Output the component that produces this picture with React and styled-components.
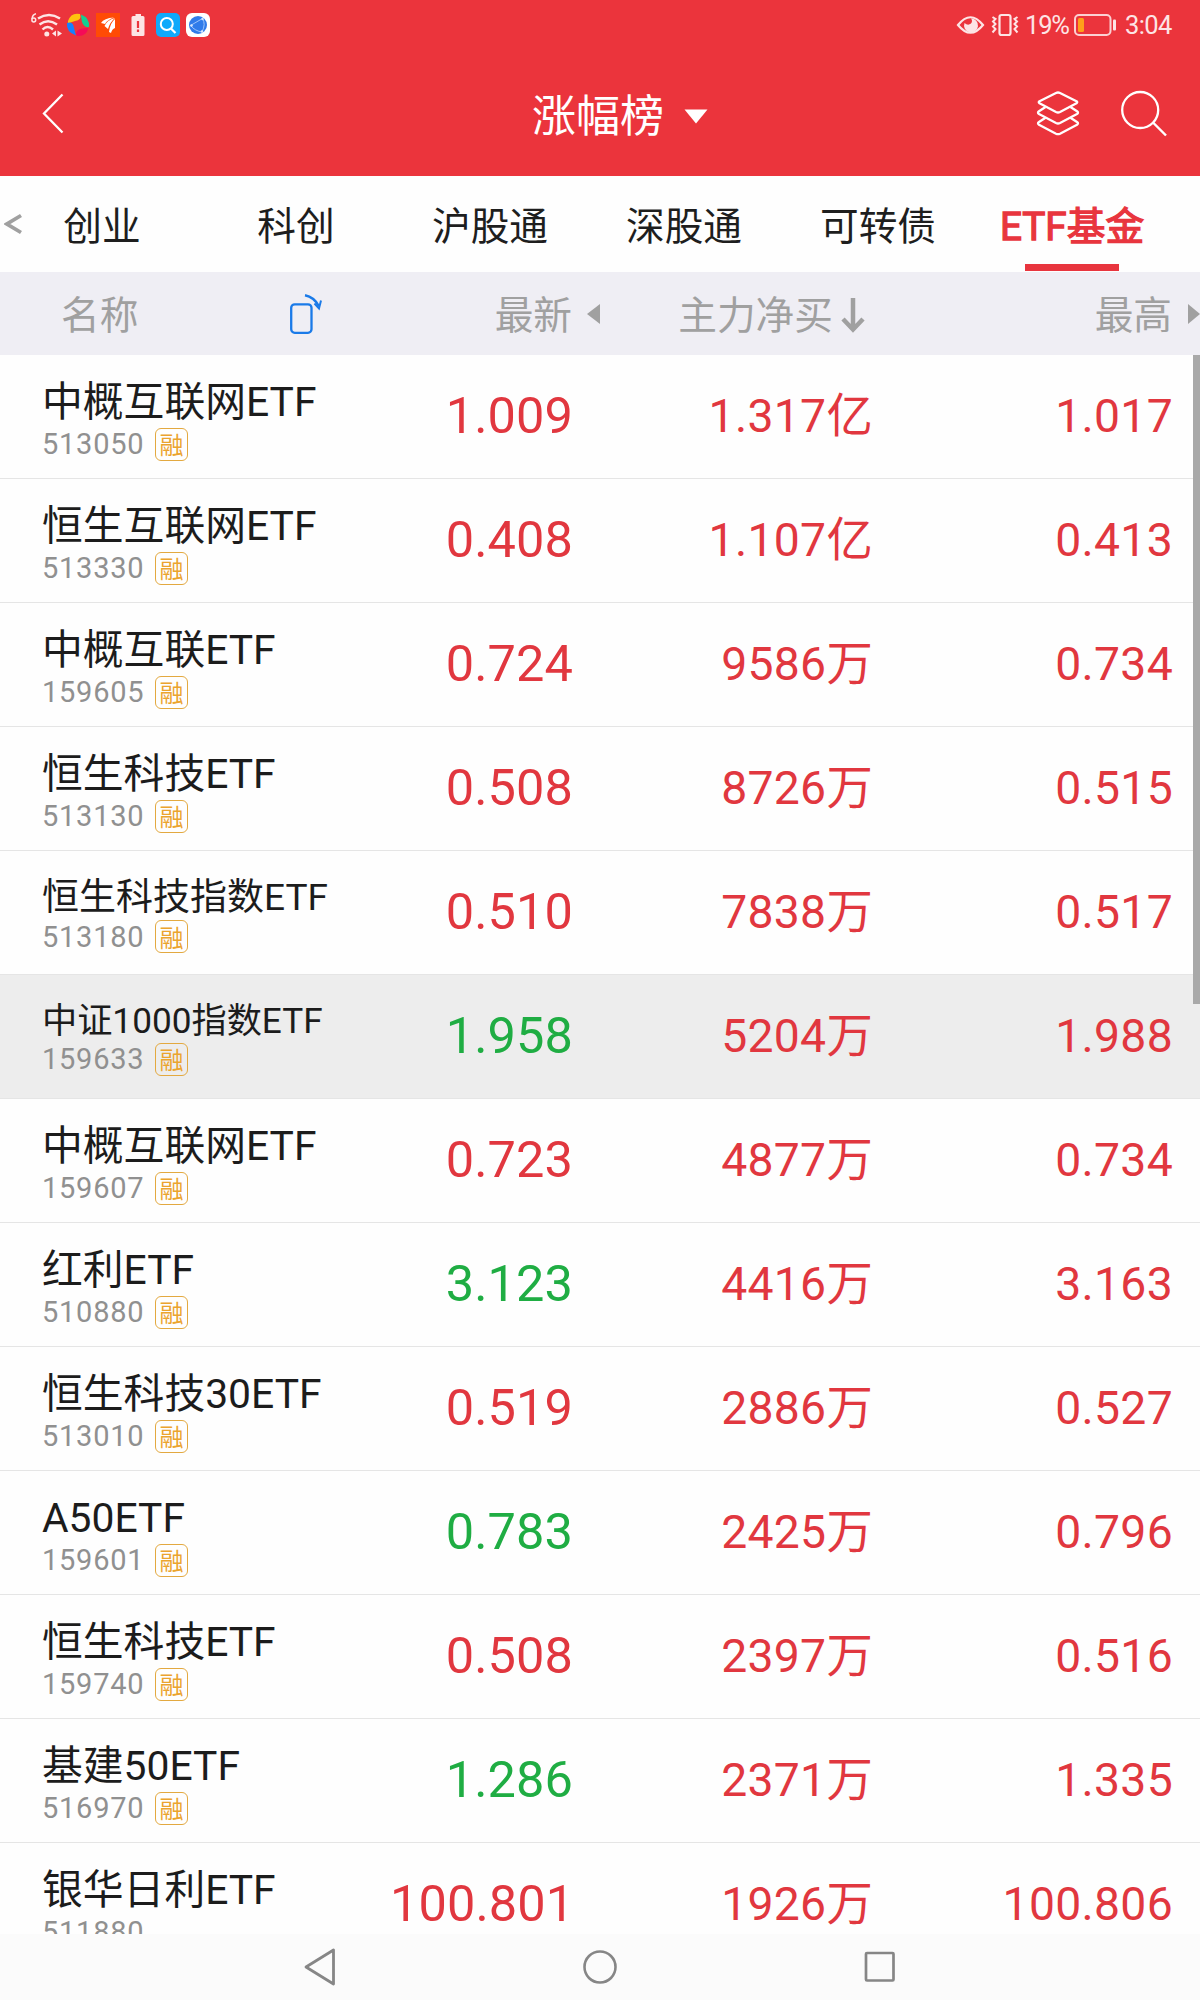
import React from "react";
import styled, { createGlobalStyle } from "styled-components"

const GlobalStyle = createGlobalStyle`
  * {
    box-sizing: border-box;
  }
  body {
    margin: 0;
    background: #fefefe;
    font-family: Roboto, "Noto Sans CJK SC", sans-serif;
  }
`

const Screen = styled.div`
  width: 1200px;
  height: 2000px;
  display: flex;
  flex-direction: column;
  overflow: hidden;
  background: #fefefe;
`

const StatusBar = styled.div`
  height: 50px;
  flex: none;
  display: flex;
  justify-content: space-between;
  align-items: center;
  padding: 0 28px 0 30px;
  background: #eb343c;
  color: #fde4e5;
`

const StatusText = styled.span`
  font-size: 25.5px;
  line-height: 30px;
  width: ${props => props.$width}px;
  letter-spacing: ${props => props.$spacing || 0}px;
  white-space: nowrap;
`

const StatusGroup = styled.div`
  display: flex;
  align-items: center;
`

const BatterySlot = styled.div`
  display: flex;
  margin: 0 8px 0 3px;
`

const TitleBar = styled.header`
  height: 126px;
  flex: none;
  display: grid;
  grid-template-columns: 300px 1fr 300px;
  align-items: center;
  padding: 0 32px 0 41px;
  background: #eb343c;
  color: #fff;
`

const Title = styled.h1`
  margin: 0;
  display: flex;
  align-items: center;
  justify-content: center;
  gap: 20px;
  padding: 7px 0 0 31px;
  font-size: 44px;
  line-height: 60px;
  font-weight: 400;
`

const Caret = styled.svg`
  width: 24px;
  height: 15px;
`

const TitleActions = styled.div`
  display: flex;
  justify-content: flex-end;
  gap: 40px;
`

const TabBar = styled.nav`
  height: 96px;
  flex: none;
  display: flex;
  padding-left: 4px;
`

const TabArrow = styled.div`
  width: 20px;
  padding-top: 36px;
`

const Tab = styled.div`
  width: 194px;
  display: flex;
  flex-direction: column;
  align-items: center;
  justify-content: space-between;
  padding: 22px 0 1px;
  margin-left: ${props => props.$shift || 0}px;
  font-size: 38.7px;
  line-height: 58px;
  white-space: nowrap;
  color: ${props => props.$active ? "#e8353e" : "#1e1e1e"};
  -webkit-text-stroke: ${props => props.$active ? "1.3px #e8353e" : "0"};
`

const Underline = styled.div`
  width: 94px;
  height: 7px;
  background: #e8353e;
`

const HeadRow = styled.div`
  height: 83px;
  flex: none;
  display: grid;
  grid-template-columns: 290px 282px 300px 300px;
  align-items: center;
  background: #efeef4;
  color: #a0a0a0;
  font-size: 38.7px;
  line-height: 56px;
`

const HeadCell = styled.div`
  display: flex;
  align-items: center;
  justify-content: ${props => props.$left ? "flex-start" : "flex-end"};
  padding-left: ${props => props.$left ? 61 : 0}px;
  white-space: nowrap;
`

const HeadLabel = styled.span`
  padding-top: 5px;
`

// sort marks hang outside of the text column
const HeadMark = styled.span`
  display: flex;
  margin-top: ${props => props.$drop || 0}px;
  width: ${props => props.$width}px;
  margin-left: ${props => props.$gap}px;
  margin-right: ${props => -(props.$hang || 0)}px;
`

const RotateCell = styled.div`
  display: flex;
  align-items: center;
  justify-content: space-between;
`

const List = styled.main`
  position: relative;
  flex: 1;
  overflow: hidden;
`

const ScrollThumb = styled.div`
  position: absolute;
  top: 0;
  right: 0;
  width: 7px;
  height: 649px;
  background: #a9a9a9;
`

const Row = styled.div`
  height: 124px;
  display: grid;
  grid-template-columns: 390px 183px 300px 300px;
  align-items: center;
  border-bottom: 1px solid #e5e5e5;
  background: ${props => props.$selected ? "#ededed" : "#fefefe"};
`

const Fund = styled.div`
  display: flex;
  flex-direction: column;
  padding: 2px 0 ${props => props.$small ? 2 : 0}px 42px;
`

const FundName = styled.div`
  font-size: ${props => props.$size}px;
  line-height: 1.42;
  margin-bottom: -4px;
  color: #1c1c1c;
  white-space: nowrap;
`

const FundCode = styled.div`
  display: flex;
  align-items: center;
  height: 33px;
  font-size: 29px;
  line-height: 33px;
  letter-spacing: 0.75px;
  color: #909090;
`

const CodeText = styled.span`
  width: 113px;
  padding-top: 1px;
`

const Badge = styled.span`
  width: 33px;
  height: 33px;
  display: flex;
  align-items: center;
  justify-content: center;
  border: 1.5px solid #e3a940;
  border-radius: 6px;
  font-family: "Noto Sans CJK SC", sans-serif;
  font-size: 24px;
  line-height: 28px;
  letter-spacing: 0;
  color: #eba42e;
`

const Price = styled.div`
  text-align: right;
  font-size: ${props => props.$large ? 50.5 : 46.3}px;
  letter-spacing: ${props => props.$large ? 0.1 : 0.3}px;
  line-height: 60px;
  padding-bottom: 1px;
  color: ${props => props.$down ? "#1fad43" : "#e1373f"};
  white-space: nowrap;
`

const NavBar = styled.footer`
  height: 66px;
  flex: none;
  display: flex;
  justify-content: center;
  align-items: center;
  gap: 246px;
  background: #fbfbfb;
`

const funds = [
  { name: "中概互联网ETF", code: "513050", last: "1.009", net: "1.317亿", high: "1.017" },
  { name: "恒生互联网ETF", code: "513330", last: "0.408", net: "1.107亿", high: "0.413" },
  { name: "中概互联ETF", code: "159605", last: "0.724", net: "9586万", high: "0.734" },
  { name: "恒生科技ETF", code: "513130", last: "0.508", net: "8726万", high: "0.515" },
  { name: "恒生科技指数ETF", code: "513180", last: "0.510", net: "7838万", high: "0.517", size: 37 },
  { name: "中证1000指数ETF", code: "159633", last: "1.958", net: "5204万", high: "1.988", size: 35.2, down: true, selected: true },
  { name: "中概互联网ETF", code: "159607", last: "0.723", net: "4877万", high: "0.734" },
  { name: "红利ETF", code: "510880", last: "3.123", net: "4416万", high: "3.163", down: true },
  { name: "恒生科技30ETF", code: "513010", last: "0.519", net: "2886万", high: "0.527" },
  { name: "A50ETF", code: "159601", last: "0.783", net: "2425万", high: "0.796", down: true },
  { name: "恒生科技ETF", code: "159740", last: "0.508", net: "2397万", high: "0.516" },
  { name: "基建50ETF", code: "516970", last: "1.286", net: "2371万", high: "1.335", down: true },
  { name: "银华日利ETF", code: "511880", last: "100.801", net: "1926万", high: "100.806", plain: true },
]

const StatusIconsLeft = () => (
  <svg width="182" height="28" viewBox="30 10 182 28">
    <g fill="none" stroke="#fde4e5" strokeWidth="2.4">
      <path d="M38 17.500Q49 10.500 60 17.500" />
      <path d="M39.500 23.500Q48 17 57 23.500" />
      <path d="M42.500 28.500Q47.500 23.500 53 28.500" />
      <path d="M36 12.800Q32.500 13.500 32 18" strokeWidth="1.500" />
      <circle cx="33.800" cy="19" r="1.900" strokeWidth="1.500" />
    </g>
    <circle cx="46.800" cy="33" r="2.500" fill="#fde4e5" />
    <path d="M52 32.500L56 29.500V35.500ZM62 32.500L57.500 29.500V35.500Z" fill="#fde4e5" />
    <path d="M68 20Q71 11 80 13Q82 19 75 20Q71 21 68 23Z" fill="#ffc20e" />
    <path d="M81 13.500Q90 17 89 26Q84 27 82 21Q81 17 81 13.500Z" fill="#12cf91" />
    <path d="M88.500 27Q86 36 77 35Q74 31 80 28Q84 27 88.500 27Z" fill="#f50b57" />
    <path d="M76 34.500Q66 31 67 22Q73 20 74 27Q75 31 76 34.500Z" fill="#1680ff" />
    <rect x="96" y="12" width="24" height="24" fill="#ff4b05" />
    <path d="M101 22Q104 17 114 16.500Q107 19 105 23ZM104.500 25Q107 19 115 17Q110 21 108 28ZM109 31Q110 22 115 18V27Q112 28 111 32Z" fill="#fff" />
    <path d="M135.500 13H141V15H143Q144.500 15 144.500 16.500V33.500Q144.500 35 143 35H133Q131.500 35 131.500 33.500V16.500Q131.500 15 133 15H135.500Z" fill="#fde4e5" />
    <path d="M138 20V27M138 28.500V31" stroke="#eb343c" strokeWidth="2.200" />
    <rect x="156" y="12" width="24" height="24" rx="5" fill="#10a9fb" />
    <circle cx="166.800" cy="23" r="6" fill="none" stroke="#fff" strokeWidth="2" />
    <path d="M171 27.500L175.500 32" stroke="#fff" strokeWidth="2.200" />
    <rect x="186" y="12" width="24" height="24" rx="6" fill="#fff" />
    <circle cx="198" cy="24" r="9" fill="#2f7bea" />
    <path d="M190.500 24.500L202.500 17.500Q206 23 202 31Q195 30 190.500 24.500" fill="none" stroke="#b9d5ff" strokeWidth="0.800" />
    <circle cx="191.500" cy="24.500" r="1.300" fill="#d5e6ff" />
    <circle cx="202.500" cy="18" r="1.200" fill="#d5e6ff" />
    <circle cx="202" cy="30.500" r="1.300" fill="#d5e6ff" />
  </svg>
)

const EyeIcon = () => (
  <svg width="69" height="28" viewBox="957 10 69 28">
    <path d="M959 24Q971.500 8.500 984 24Q971.500 39.500 959 24Z" fill="none" stroke="#fde4e5" strokeWidth="2.200" />
    <path d="M972 17.500A7 7 0 1 1 965.500 22Q969 25 972 22.500Q974 20 972 17.500Z" fill="#fde4e5" />
    <rect x="1000.500" y="14" width="11" height="20" rx="2" fill="none" stroke="#fde4e5" strokeWidth="2.200" />
    <path d="M993.500 16L996.500 18L994 20.500L996.500 23L994 25.500L996.500 28L993.500 31.500M1018.500 16L1015.500 18L1018 20.500L1015.500 23L1018 25.500L1015.500 28L1018.500 31.500" fill="none" stroke="#fde4e5" strokeWidth="2" />
  </svg>
)

const BatteryIcon = () => (
  <svg width="43" height="24" viewBox="0 0 43 24">
    <rect x="1" y="2" width="35.500" height="20" rx="4" fill="none" stroke="#fbd0d2" strokeWidth="2" />
    <rect x="4" y="5" width="6" height="14" rx="1.500" fill="#ff9f1a" />
    <rect x="39" y="6.500" width="3" height="11" rx="1" fill="#fde4e5" />
  </svg>
)

const BackIcon = () => (
  <svg width="26" height="44" viewBox="0 0 26 44">
    <path d="M21.500 3.500L3 22.500L21.500 41.500" fill="none" stroke="#fff" strokeWidth="2.300" />
  </svg>
)

const LayersIcon = () => (
  <svg width="44" height="48" viewBox="0 0 44 48">
    <g fill="none" stroke="#fff" strokeWidth="2.300" strokeLinejoin="round">
      <path d="M20 4Q22 3 24 4L40.500 12.300Q42 13.200 40.500 14.200L24 23Q22 24 20 23L3.500 14.200Q2 13.200 3.500 12.300Z" />
      <path d="M9.500 18L3 22.300Q1 23.700 3 25L20 34Q22 35 24 34L41 25Q43 23.700 41 22.300L34.500 18" />
      <path d="M9.500 28.700L3 33Q1 34.300 3 35.700L20 44.700Q22 45.700 24 44.700L41 35.700Q43 34.300 41 33L34.500 28.700" />
    </g>
  </svg>
)

const SearchIcon = () => (
  <svg width="48" height="48" viewBox="0 0 48 48">
    <circle cx="20.200" cy="21" r="18" fill="none" stroke="#fff" strokeWidth="2.300" />
    <path d="M33 33.500L46 46.500" stroke="#fff" strokeWidth="2.400" />
  </svg>
)

const RotateIcon = () => (
  <svg width="34" height="42" viewBox="0 0 34 42">
    <rect x="1.200" y="11.300" width="20.300" height="28.500" rx="3.500" fill="none" stroke="#1a7ae8" strokeWidth="2.300" />
    <path d="M15 2.200Q24 4 28.800 13" fill="none" stroke="#1a7ae8" strokeWidth="2.500" />
    <path d="M24.500 10.500L29 15.500L31 7.500" fill="none" stroke="#1a7ae8" strokeWidth="2" />
  </svg>
)

const App = () => {
  return (
    <>
      <GlobalStyle />
      <Screen>

        <StatusBar>
          <StatusIconsLeft />
          <StatusGroup>
            <EyeIcon />
            <StatusText $width={46} $spacing={-1.2}>19%</StatusText>
            <BatterySlot>
              <BatteryIcon />
            </BatterySlot>
            <StatusText $width={47} $spacing={-0.6}>3:04</StatusText>
          </StatusGroup>
        </StatusBar>

        <TitleBar>
          <BackIcon />
          <Title>
            涨幅榜
            <Caret viewBox="0 0 24 15"><path d="M0.500 0.500H23.500L12 14.500Z" fill="#fff" /></Caret>
          </Title>
          <TitleActions>
            <LayersIcon />
            <SearchIcon />
          </TitleActions>
        </TitleBar>

        <TabBar>
          <TabArrow>
            <svg width="18" height="24" viewBox="0 0 18 24"><path d="M17 3.500L3 12L17 20.500" fill="none" stroke="#a0a0a0" strokeWidth="3.800" /></svg>
          </TabArrow>
          <Tab $shift={-19}>创业</Tab>
          <Tab>科创</Tab>
          <Tab>沪股通</Tab>
          <Tab>深股通</Tab>
          <Tab>可转债</Tab>
          <Tab $active>
            ETF基金
            <Underline />
          </Tab>
        </TabBar>

        <HeadRow>
          <HeadCell $left>
            <HeadLabel>名称</HeadLabel>
          </HeadCell>
          <RotateCell>
            <RotateIcon />
            <HeadCell>
              <HeadLabel>最新</HeadLabel>
              <HeadMark $width={13} $gap={15} $hang={28}>
                <svg width="13" height="20" viewBox="0 0 13 20"><path d="M13 0V20L0 10Z" fill="#a0a0a0" /></svg>
              </HeadMark>
            </HeadCell>
          </RotateCell>
          <HeadCell>
            <HeadLabel>主力净买</HeadLabel>
            <HeadMark $width={24} $gap={8} $hang={-7} $drop={5}>
              <svg width="24" height="36" viewBox="0 0 24 36"><path d="M12 0V31M2 21L12 31.500L22 21" fill="none" stroke="#a0a0a0" strokeWidth="4.500" /></svg>
            </HeadMark>
          </HeadCell>
          <HeadCell>
            <HeadLabel>最高</HeadLabel>
            <HeadMark $width={12} $gap={16} $hang={28}>
              <svg width="12" height="20" viewBox="0 0 12 20"><path d="M0 0V20L12 10Z" fill="#a0a0a0" /></svg>
            </HeadMark>
          </HeadCell>
        </HeadRow>

        <List>
          {funds.map(fund => (
            <Row key={fund.code} $selected={fund.selected}>
              <Fund $small={fund.size}>
                <FundName $size={fund.size || 40.8}>{fund.name}</FundName>
                <FundCode>
                  <CodeText>{fund.code}</CodeText>
                  {!fund.plain && <Badge>融</Badge>}
                </FundCode>
              </Fund>
              <Price $large $down={fund.down}>{fund.last}</Price>
              <Price>{fund.net}</Price>
              <Price>{fund.high}</Price>
            </Row>
          ))}
          <ScrollThumb />
        </List>

        <NavBar>
          <svg width="34" height="40" viewBox="0 0 34 40"><path d="M30.500 3V37L3 20Z" fill="none" stroke="#868686" strokeWidth="2.800" strokeLinejoin="round" /></svg>
          <svg width="34" height="34" viewBox="0 0 34 34"><circle cx="17" cy="17" r="15.500" fill="none" stroke="#868686" strokeWidth="2.600" /></svg>
          <svg width="34" height="34" viewBox="0 0 34 34"><rect x="3" y="3" width="27.500" height="27.500" rx="1" fill="none" stroke="#868686" strokeWidth="2.700" /></svg>
        </NavBar>

      </Screen>
    </>
  )
}

export default App;
